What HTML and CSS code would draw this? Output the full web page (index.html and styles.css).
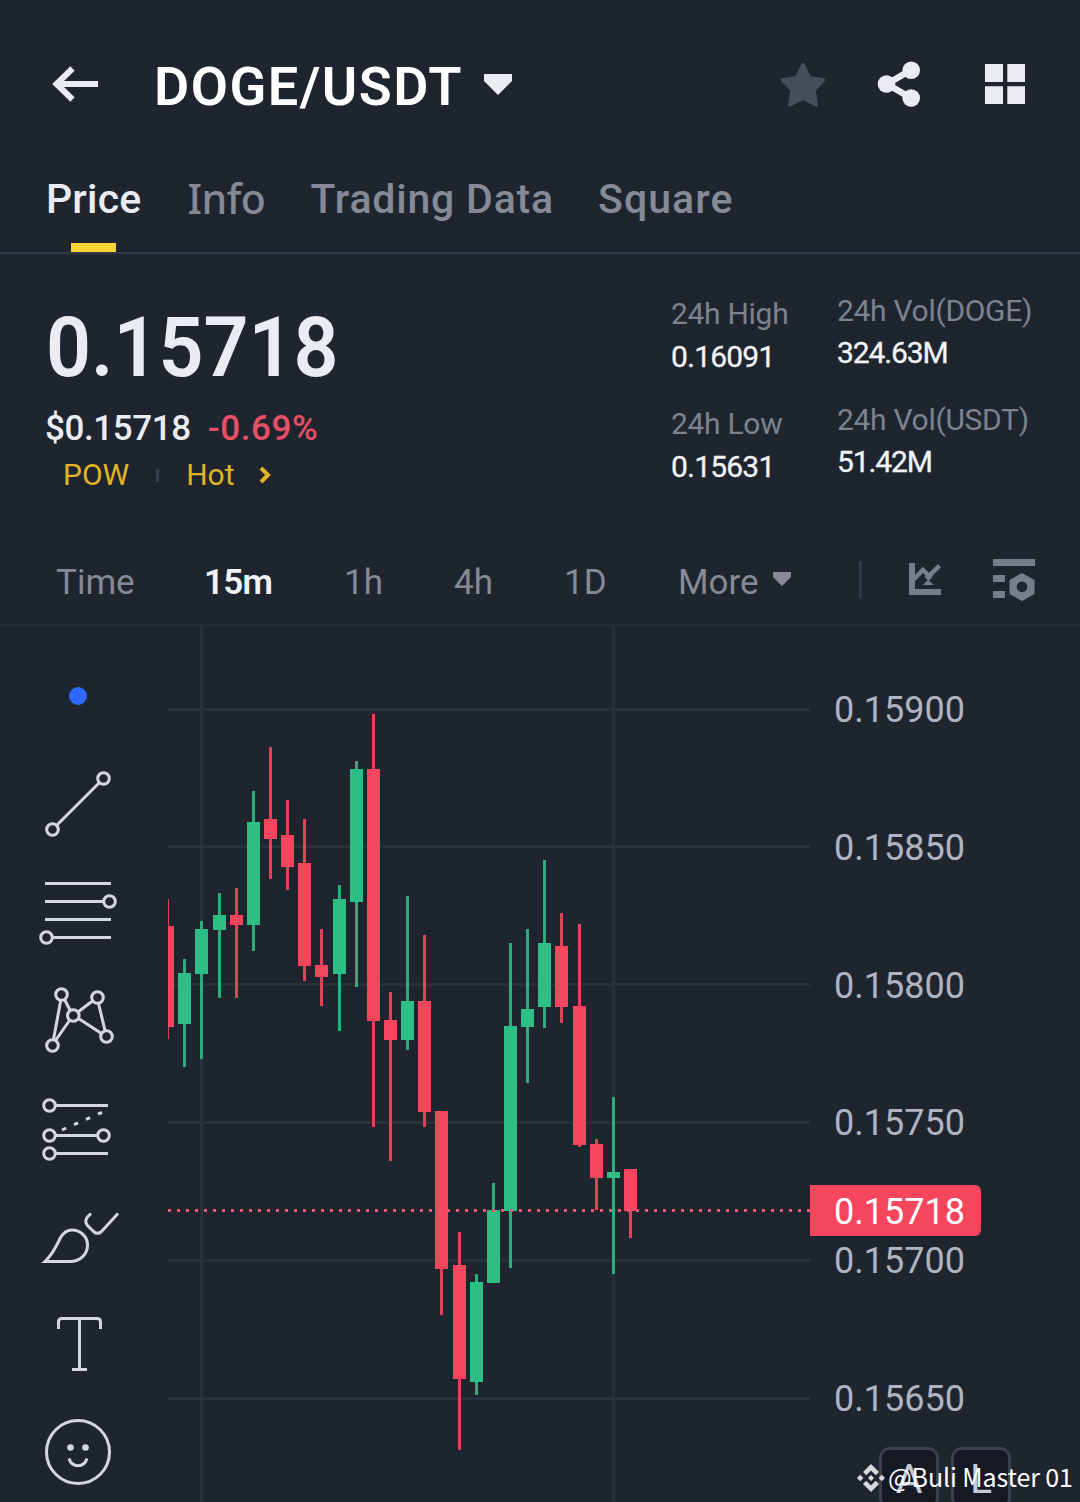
FILE: index.html
```html
<!DOCTYPE html>
<html lang="en">
<head>
<meta charset="utf-8">
<title>DOGE/USDT</title>
<link rel="stylesheet" href="styles.css">
</head>
<body>
<div class="app">
  <header class="topbar">
    <svg class="back" viewBox="0 0 46 36" width="46" height="36"><path d="M20.5 2.500 4.500 18l16 15.500M4 18h42" fill="none" stroke="#eaecf2" stroke-width="6"/></svg>
    <h1 class="pair">DOGE/USDT</h1>
    <svg class="pair-caret" viewBox="0 0 28 21" width="28" height="21"><path d="M0 0h28v7L14 21 0 7z" fill="#eaecf2"/></svg>
    <div class="actions">
      <svg viewBox="0 0 46 46" width="46" height="46"><path d="M23 4 29 17l14 2-9.500 10 2.500 14.500L23 37 10 43.500 12.500 29 3 19l14-2z" fill="#474d5b" stroke="#474d5b" stroke-width="4" stroke-linejoin="round"/></svg>
      <svg viewBox="0 0 44 46" width="44" height="46"><path d="M34 9 10 23l24 14" fill="none" stroke="#eaecf2" stroke-width="6.500"/><circle cx="9.500" cy="23" r="8.800"/><circle cx="34.200" cy="9.200" r="8.800"/><circle cx="34.200" cy="37" r="8.800"/></svg>
      <svg viewBox="0 0 40 40" width="40" height="40"><path d="M0 0h18v18H0zM22.300 0H40v18H22.300zM0 22.300h18V40H0zM22.300 22.300H40V40H22.300z"/></svg>
    </div>
  </header>

  <nav class="tabs">
    <span class="tab active">Price</span>
    <span class="tab info">Info</span>
    <span class="tab trading">Trading Data</span>
    <span class="tab square">Square</span>
  </nav>

  <section class="summary">
    <div class="quote">
      <div class="last">0.15718</div>
      <div class="fiat"><span class="usd">$0.15718</span><span class="change">-0.69%</span></div>
      <div class="tags">
        <span>POW</span><i class="tag-sep"></i><span>Hot</span>
        <svg viewBox="0 0 12 18" width="12" height="18"><path d="M2 2l7 7-7 7" fill="none" stroke="#e0b422" stroke-width="4"/></svg>
      </div>
    </div>
    <div class="stats high-low">
      <div class="stat"><span class="label">24h High</span><span class="value">0.16091</span></div>
      <div class="stat"><span class="label">24h Low</span><span class="value">0.15631</span></div>
    </div>
    <div class="stats volume">
      <div class="stat"><span class="label">24h Vol(DOGE)</span><span class="value">324.63M</span></div>
      <div class="stat"><span class="label">24h Vol(USDT)</span><span class="value">51.42M</span></div>
    </div>
  </section>

  <nav class="intervals">
    <span>Time</span>
    <span class="active">15m</span>
    <span>1h</span>
    <span>4h</span>
    <span>1D</span>
    <span class="more">More<svg viewBox="0 0 18 14" width="18" height="14"><path d="M0 0h18v5l-9 9-9-9z"/></svg></span>
    <i class="divider"></i>
    <svg viewBox="0 0 32 32" width="32" height="32"><path d="M0 0h6v26h26v6H0z"/><path d="M4 17 14 7l6 6L30.500 2.500" fill="none" stroke="#777d8a" stroke-width="4.500"/><path d="M15 13.500h9L19.500 18zM13.500 22 19 17l6 5z"/></svg>
    <svg class="settings" viewBox="0 0 42 42" width="42" height="42"><path d="M0 0h42v7H0zM0 16h12v7H0zM0 32h12v7H0z"/><path fill-rule="evenodd" d="M29 14l12.500 7v14L29 42l-12.500-7V21zM29 22.500a5.300 5.300 0 1 0 0 10.600 5.300 5.300 0 0 0 0-10.600z"/></svg>
  </nav>

  <main class="chart">
    <aside class="tools">
      <svg viewBox="36 642 84 108"><circle cx="78" cy="696" r="9" fill="#2e68ff" stroke="none"/></svg>
      <svg viewBox="36 750 84 108"><path d="M56.500 825.500l43-43"/><circle cx="52.500" cy="829.500" r="5.800"/><circle cx="103.500" cy="778.500" r="5.800"/></svg>
      <svg viewBox="36 858 84 108"><path d="M45 883.500h66M45 901.500h59M45 919.500h66M52 937.500h59"/><circle cx="109.500" cy="901.500" r="5.800"/><circle cx="46.500" cy="937.500" r="5.800"/></svg>
      <svg viewBox="36 966 84 108"><path d="M60.700 1000.500 53.500 1039.500M64.500 999.500l5.500 10.500M78 1012l14.500-11M98.500 1003.500l6.500 27M78.500 1018.500l23 15M69.500 1020.500l-14 20"/><circle cx="61.500" cy="994.500" r="5.800"/><circle cx="97.500" cy="997.500" r="5.800"/><circle cx="73.300" cy="1015.500" r="5.800"/><circle cx="52.500" cy="1045.500" r="5.800"/><circle cx="106.500" cy="1036.500" r="5.800"/></svg>
      <svg viewBox="36 1074 84 108"><path d="M55 1105.500h53M55 1135.500h43M55 1153.500h53"/><path d="M62 1130l42-18.500" stroke-dasharray="4.500 8.600"/><circle cx="49.500" cy="1105.500" r="5.800"/><circle cx="49.500" cy="1135.500" r="5.800"/><circle cx="103.500" cy="1135.500" r="5.800"/><circle cx="49.500" cy="1153.500" r="5.800"/></svg>
      <svg viewBox="36 1182 84 108"><path d="M45 1261.500C53 1254 57 1245 60 1238.500 63 1233 67 1230 72 1230c8.500 0 15.500 6.500 15.500 15 0 9-7 16.500-17.500 16.500zM91 1213.500l-3.500 3.500q-3.500 4 0 8.500l6 6q4 3.500 8 0L118 1213.500"/></svg>
      <svg viewBox="36 1290 84 108"><path d="M58.500 1329v-7q0-3.500 3.500-3.500h35q3.500 0 3.500 3.500v7M79.500 1318.500v51M72 1369.500h15"/></svg>
      <svg viewBox="36 1398 84 108"><circle cx="78" cy="1452" r="31.500"/><path d="M69 1458.500c3 9.500 15 9.500 18 0"/><circle class="eye" cx="70.500" cy="1447.500" r="3.300"/><circle class="eye" cx="85.500" cy="1447.500" r="3.300"/></svg>
    </aside>

    <svg class="plot" viewBox="168 627 642 875" width="642" height="875">
      <g class="grid">
        <path d="M201.500 625v877M613.500 625v877M168 709.500h642M168 846.500h642M168 984.500h642M168 1122.500h642M168 1260.500h642M168 1398.500h642"/>
      </g>
      <g id="candles"></g>
      <path class="last-line" d="M168 1210.500h642"/>
    </svg>

    <div class="axis">
      <span>0.15900</span>
      <span>0.15850</span>
      <span>0.15800</span>
      <span>0.15750</span>
      <span>0.15700</span>
      <span>0.15650</span>
      <div class="last-badge">0.15718</div>
    </div>

    <div class="scale-buttons"><b>A</b><b>L</b></div>
    <div class="watermark">
      <svg viewBox="0 0 28 28" width="28" height="28"><path d="M14 0l8 8-3.300 3.300L14 6.600l-4.700 4.700L6 8zM14 28l8-8-3.300-3.300-4.700 4.700-4.700-4.700L6 20zM14 11l3 3-3 3-3-3zM3.200 10.800 6.400 14l-3.200 3.200L0 14zM24.800 10.800 28 14l-3.200 3.200L21.600 14z"/></svg>
      <span>@Buli Master 01</span>
    </div>
  </main>
</div>
<script src="chart.js"></script>
</body>
</html>
```
FILE: styles.css
```css
* { box-sizing: border-box; }

body {
  margin: 0;
  background: #1f252f;
  color: #eaecf2;
  font-family: Roboto, "Noto Sans", sans-serif;
}

svg { display: block; flex: none; }

.app {
  width: 1080px;
  height: 1502px;
  overflow: hidden;
  display: flex;
  flex-direction: column;
}

/* Top bar */
.topbar {
  height: 168px;
  display: flex;
  align-items: center;
  padding: 0 55px 0 52px;
}
.pair {
  margin: 5px 0 0 56px;
  font-size: 54px;
  font-weight: 600;
  line-height: 64px;
  letter-spacing: 1.5px;
  color: #fff;
}
.pair-caret { margin-left: 21px; }
.actions {
  margin-left: auto;
  display: flex;
  align-items: center;
  fill: #eaecf2;
}
.actions svg + svg { margin-left: 51px; }
.actions svg:last-child { margin-left: 64px; }

/* Section tabs */
.tabs {
  height: 86px;
  display: flex;
  gap: 44px;
  padding-left: 46px;
  border-bottom: 2px solid #343a45;
  font-size: 41px;
  font-weight: 500;
  line-height: 63px;
  color: #858a96;
}
.tab { letter-spacing: 0.8px; }
.tab.active {
  display: flex;
  flex-direction: column;
  justify-content: space-between;
  align-items: center;
  letter-spacing: 0.2px;
  color: #eaecf2;
}
.tab.active::after {
  content: "";
  width: 45px;
  height: 9px;
  background: #fcd535;
}
.tab.info {
  width: 79px;
  margin-left: 2px;
  font-family: "Noto Sans", sans-serif;
  line-height: 61px;
  letter-spacing: -0.5px;
}
.tab.square { letter-spacing: 1.1px; }

/* Price summary */
.summary {
  height: 286px;
  display: grid;
  grid-template-columns: 626px 166px 1fr;
  padding-left: 45px;
}
.quote { padding-top: 49px; }
.last {
  padding-left: 1px;
  font-size: 83px;
  font-weight: 600;
  line-height: 90px;
  transform: scaleX(0.95);
  transform-origin: 0 50%;
}
.fiat {
  display: flex;
  gap: 18px;
  margin-top: 18px;
  font-size: 35px;
  font-weight: 500;
  line-height: 36px;
}
.usd { letter-spacing: -0.4px; }
.change { margin-left: -1px; color: #e84f66; letter-spacing: 0.6px; }
.tags {
  display: flex;
  align-items: center;
  margin-top: 10px;
  padding-left: 18px;
  font-size: 30px;
  line-height: 36px;
  color: #e0b422;
}
.tag-sep {
  width: 3px;
  height: 13px;
  margin: 0 27px;
  background: #3a404b;
}
.tags svg { margin-left: 24px; }

.stats {
  display: flex;
  flex-direction: column;
  font-size: 30px;
  white-space: nowrap;
}
.stat { display: flex; flex-direction: column; }
.high-low { padding-top: 38px; gap: 24px; line-height: 43px; }
.volume { padding-top: 36px; gap: 25px; line-height: 42px; }
.label { color: #7c828e; letter-spacing: -0.3px; }
.value { color: #f2f4f8; letter-spacing: -0.8px; -webkit-text-stroke: 0.3px #f2f4f8; }
.volume .value { letter-spacing: -1.1px; }

/* Interval selector */
.intervals {
  height: 87px;
  display: grid;
  grid-template-columns: 148px 140px 110px 110px 114px 181px 50px 84px 42px;
  align-items: center;
  padding-left: 56px;
  border-bottom: 3px solid #262c36;
  font-size: 35px;
  color: #858a96;
  fill: #777d8a;
}
.intervals .active { font-weight: 600; color: #f0f2f7; letter-spacing: -0.7px; }
.more { display: flex; align-items: center; gap: 14px; }
.more svg { fill: #858a96; margin-top: -6px; }
.divider { width: 3px; height: 37px; margin-top: -5px; background: #333944; }
.intervals > svg { margin-top: -6px; }
.intervals > .settings { margin-top: -4px; }

/* Chart */
.chart {
  position: relative;
  flex: 1;
  display: grid;
  grid-template-columns: 168px 642px 270px;
  min-height: 0;
}
.tools {
  padding: 15px 0 0 36px;
  fill: none;
  stroke: #d3d7e2;
  stroke-width: 3;
}
.tools svg { width: 84px; height: 108px; }
.eye { fill: #d3d7e2; stroke: none; }

.plot { overflow: hidden; }
.grid { stroke: #2a303a; stroke-width: 3; fill: none; }
.up { fill: #2ebd85; }
.down { fill: #f6465d; }
.wick { opacity: 0.9; }
.last-line { stroke: #e75a6e; stroke-width: 3; stroke-dasharray: 3 6; }

.axis {
  position: relative;
  padding: 15px 0 0 24px;
  font-size: 36px;
  line-height: 137.750px;
  color: #b0b4c0;
}
.axis span { display: block; height: 137.750px; }
.last-badge {
  position: absolute;
  left: 0;
  top: 558px;
  width: 171px;
  height: 51px;
  padding-left: 24px;
  border-radius: 0 6px 6px 0;
  background: #f6465d;
  color: #fff;
  line-height: 54px;
}

.scale-buttons {
  position: absolute;
  left: 879px;
  top: 820px;
  display: flex;
  gap: 12px;
}
.scale-buttons b {
  width: 60px;
  height: 62px;
  border: 3px solid #3b414c;
  border-radius: 11px;
  background: #141924;
  color: #c5cad6;
  font-size: 41px;
  font-weight: 400;
  line-height: 58px;
  text-align: center;
}

.watermark {
  position: absolute;
  left: 857px;
  top: 834px;
  display: flex;
  align-items: center;
  gap: 3px;
  font: 25px/36px "Noto Sans CJK SC", "Noto Sans", sans-serif;
  letter-spacing: -0.1px;
  white-space: nowrap;
  color: #fff;
}
.watermark span { margin-top: -3px; }
.watermark svg { fill: #d8d9db; }
```
FILE: chart.js
```js
// Each candle: centre x, body top, body bottom, wick top, wick bottom, direction.
const candles = [
  [184.5, 973, 1024, 959, 1067, 'up'],
  [201.5, 929, 974, 921, 1059, 'up'],
  [219.5, 915, 930, 893, 998, 'up'],
  [236.5, 915, 925, 888, 998, 'down'],
  [253.5, 822, 925, 791, 951, 'up'],
  [270.5, 819, 839, 747, 879, 'down'],
  [287.5, 835, 867, 800, 890, 'down'],
  [304.5, 863, 966, 819, 981, 'down'],
  [321.5, 965, 977, 929, 1006, 'down'],
  [339.5, 899, 974, 885, 1031, 'up'],
  [356.5, 769, 902, 761, 987, 'up'],
  [373.5, 769, 1021, 714, 1127, 'down'],
  [390.5, 1020, 1040, 992, 1161, 'down'],
  [407.5, 1001, 1040, 896, 1050, 'up'],
  [424.5, 1001, 1112, 935, 1127, 'down'],
  [441.5, 1111, 1269, 1111, 1315, 'down'],
  [459.5, 1265, 1379, 1232, 1450, 'down'],
  [476.5, 1282, 1382, 1274, 1395, 'up'],
  [493.5, 1210, 1283, 1183, 1283, 'up'],
  [510.5, 1026, 1211, 943, 1268, 'up'],
  [527.5, 1009, 1027, 929, 1083, 'up'],
  [544.5, 943, 1007, 860, 1028, 'up'],
  [561.5, 946, 1007, 913, 1023, 'down'],
  [579.5, 1006, 1145, 924, 1147, 'down'],
  [596.5, 1144, 1178, 1139, 1210, 'down'],
  [613.5, 1172, 1178, 1097, 1274, 'up'],
  [630.5, 1169, 1211, 1169, 1238, 'down']
];

const layer = document.getElementById('candles');

function bar(x, y, width, height, cls) {
  const r = document.createElementNS('http://www.w3.org/2000/svg', 'rect');
  r.setAttribute('x', x);
  r.setAttribute('y', y);
  r.setAttribute('width', width);
  r.setAttribute('height', height);
  r.setAttribute('class', cls);
  layer.appendChild(r);
}

// The oldest candle is cut off by the left edge of the plot.
bar(168, 899, 1, 140, 'down wick');
bar(168, 926, 6, 101, 'down');

for (const [x, top, bottom, high, low, dir] of candles) {
  bar(x - 1.5, high, 3, low - high, dir + ' wick');
  bar(x - 6.5, top, 13, bottom - top, dir);
}
```
